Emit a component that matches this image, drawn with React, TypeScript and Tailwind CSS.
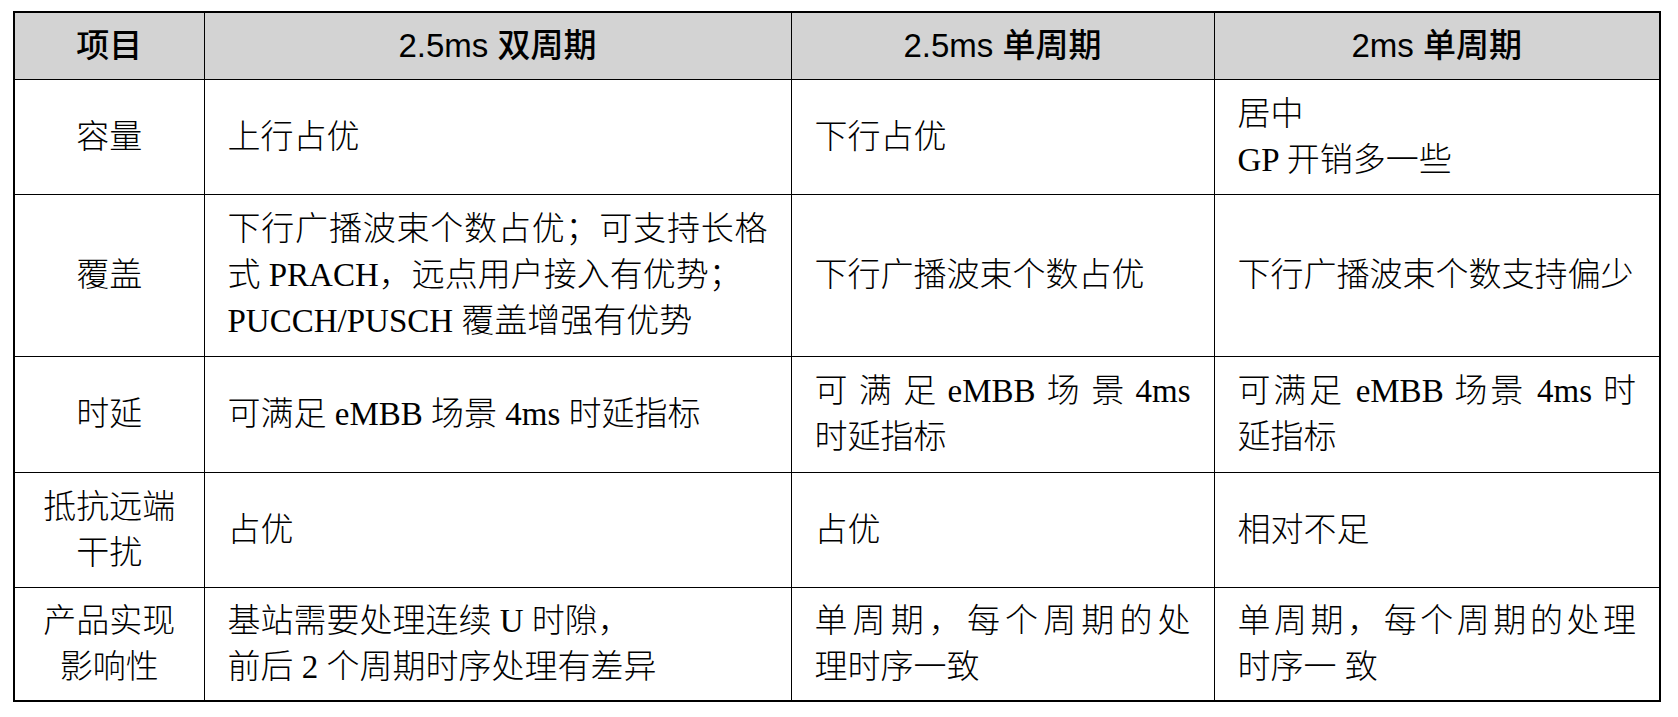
// TDD frame structure comparison table

type Line = { text: string; justify?: boolean };
type Cell = Line[];

const headers = ['项目', '2.5ms 双周期', '2.5ms 单周期', '2ms 单周期'];

const L = (text: string, justify = false): Line => ({ text, justify });

const rows: { label: string[]; h: string; cells: Cell[] }[] = [
  {
    label: ['容量'],
    h: 'h-[115px]',
    cells: [[L('上行占优')], [L('下行占优')], [L('居中'), L('GP 开销多一些')]],
  },
  {
    label: ['覆盖'],
    h: 'h-[162px]',
    cells: [
      [L('下行广播波束个数占优；可支持长格', true), L('式 PRACH，远点用户接入有优势；'), L('PUCCH/PUSCH 覆盖增强有优势')],
      [L('下行广播波束个数占优')],
      [L('下行广播波束个数支持偏少')],
    ],
  },
  {
    label: ['时延'],
    h: 'h-[116px]',
    cells: [
      [L('可满足 eMBB 场景 4ms 时延指标')],
      [L('可满足eMBB场景4ms', true), L('时延指标')],
      [L('可满足 eMBB 场景 4ms 时', true), L('延指标')],
    ],
  },
  {
    label: ['抵抗远端', '干扰'],
    h: 'h-[115px]',
    cells: [[L('占优')], [L('占优')], [L('相对不足')]],
  },
  {
    label: ['产品实现', '影响性'],
    h: 'h-[114px]',
    cells: [
      [L('基站需要处理连续 U 时隙，'), L('前后 2 个周期时序处理有差异')],
      [L('单周期，每个周期的处', true), L('理时序一致')],
      [L('单周期，每个周期的处理', true), L('时序一 致')],
    ],
  },
];

function CellLines({ lines }: { lines: Cell }) {
  return (
    <>
      {lines.map((l, i) => (
        <div
          key={i}
          className={l.justify ? 'whitespace-nowrap text-justify [text-align-last:justify]' : 'whitespace-nowrap'}
        >
          {l.text}
        </div>
      ))}
    </>
  );
}

export default function App() {
  return (
    <div lang="zh-CN" className="w-[1678px] h-[717px] bg-white pt-[11px] pl-[13px]">
      <table className="table-fixed border-collapse border-2 border-black w-[1646px] text-black">
        <colgroup>
          <col className="w-[190px]" />
          <col className="w-[587px]" />
          <col className="w-[423px]" />
          <col className="w-[446px]" />
        </colgroup>
        <thead>
          <tr className="h-[67px] bg-[#d3d3d3]">
            {headers.map((h) => (
              <th
                key={h}
                className="border border-black text-center align-middle font-medium text-[33px] leading-[40px] font-['Liberation_Sans','Noto_Sans_CJK_SC',sans-serif]"
              >
                {h}
              </th>
            ))}
          </tr>
        </thead>
        <tbody className="font-['Liberation_Serif','Noto_Sans_CJK_SC',serif] font-light text-[33px] leading-[46px]">
          {rows.map((r) => (
            <tr key={r.label.join('')} className={r.h}>
              <td className="border border-black text-center align-middle">
                {r.label.map((t) => (
                  <div key={t}>{t}</div>
                ))}
              </td>
              {r.cells.map((c, i) => (
                <td key={i} className="border border-black align-middle px-[23px]">
                  <CellLines lines={c} />
                </td>
              ))}
            </tr>
          ))}
        </tbody>
      </table>
    </div>
  );
}
